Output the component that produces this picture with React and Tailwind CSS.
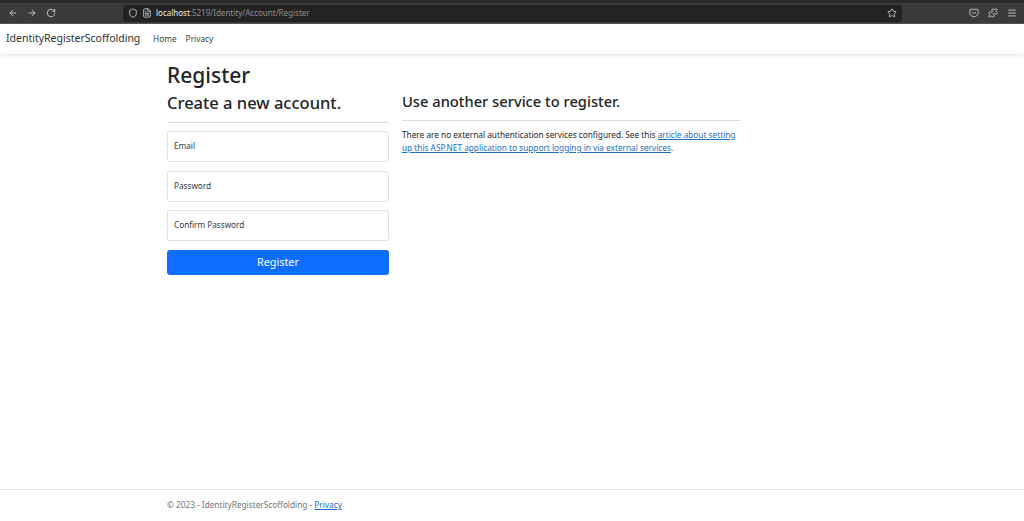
import { ArrowLeft, ArrowRight, RotateCw, Shield, FileText, Star, Puzzle, Menu, Pocket } from "lucide-react";

function Field({ label, gap = "mb-[8.5px]" }) {
  return (
    <div className={`h-[31px] ${gap} flex items-center px-[6px] border border-[#dee2e6] rounded-[3px] bg-white text-[8.2px] text-[#333a40]`}>
      {label}
    </div>
  );
}

export default function App() {
  return (
    <div className="w-[1024px] h-[521px] overflow-hidden flex flex-col bg-white text-[#212529] font-['Noto_Sans',sans-serif]">
      <header className="h-[24px] shrink-0 flex items-center bg-[#3b3b3b] border-t-[3px] border-t-[#2a2a2a] border-b border-b-[#555555] text-[#d4d4d4]">
        <div className="w-[123px] flex items-center gap-[9px] pl-[8px]">
          <ArrowLeft size={10} />
          <ArrowRight size={10} />
          <RotateCw size={10} />
        </div>
        <div className="w-[779px] h-[17px] flex items-center rounded-[3px] bg-[#232323] px-[5px] text-[8px]">
          <Shield size={10} />
          <FileText size={10} className="ml-[4px]" />
          <span className="ml-[4px]">
            <span className="text-[#eeeeee]">localhost</span>
            <span className="text-[#8f8f8f]">:5219/Identity/Account/Register</span>
          </span>
          <Star size={10} className="ml-auto" />
        </div>
        <div className="flex flex-1 items-center gap-[9px] pl-[67px]">
          <Pocket size={10} />
          <Puzzle size={10} />
          <Menu size={10} />
        </div>
      </header>

      <nav className="h-[30px] shrink-0 flex items-center pl-[6px] bg-white shadow-[0_1px_4px_rgba(0,0,0,0.12)]">
        <span className="text-[10.5px] text-[#2b2f33] w-[147px]">IdentityRegisterScoffolding</span>
        <span className="text-[8.3px] text-[#3a3f44] mr-[9px]">Home</span>
        <span className="text-[8.3px] text-[#3a3f44]">Privacy</span>
      </nav>

      <main className="flex-1 pl-[167px] pt-[7px]">
        <h1 className="text-[21px] leading-[29px] font-medium">Register</h1>
        <div className="flex gap-[13px]">
          <section className="w-[222px]">
            <h2 className="mt-[1px] text-[16.5px] leading-[24px] font-medium mb-[7px]">Create a new account.</h2>
            <hr className="border-t border-[#dcdcdc] mb-[8px]" />
            <Field label="Email" />
            <Field label="Password" />
            <Field label="Confirm Password" gap="mb-[7px]" />
            <button className="w-full h-[25px] rounded-[3px] bg-[#0d6efd] text-white text-[10.8px]">Register</button>
          </section>
          <section className="w-[339px] -mt-[1px]">
            <h3 className="text-[14.7px] leading-[24px] font-medium mb-[7px]">Use another service to register.</h3>
            <hr className="border-t border-[#dcdcdc] mb-[7px]" />
            <p className="text-[8.25px] leading-[13px]">
              There are no external authentication services configured. See this{" "}
              <a className="text-[#1b6ec2] underline">article about setting up this ASP.NET application to support logging in via external services</a>.
            </p>
          </section>
        </div>
      </main>

      <footer className="h-[32px] shrink-0 flex items-center pl-[167px] border-t border-[#e4e6e8] text-[8.25px] text-[#6c757d]">
        <span>
          © 2023 - IdentityRegisterScoffolding - <a className="text-[#1b6ec2] underline">Privacy</a>
        </span>
      </footer>
    </div>
  );
}
